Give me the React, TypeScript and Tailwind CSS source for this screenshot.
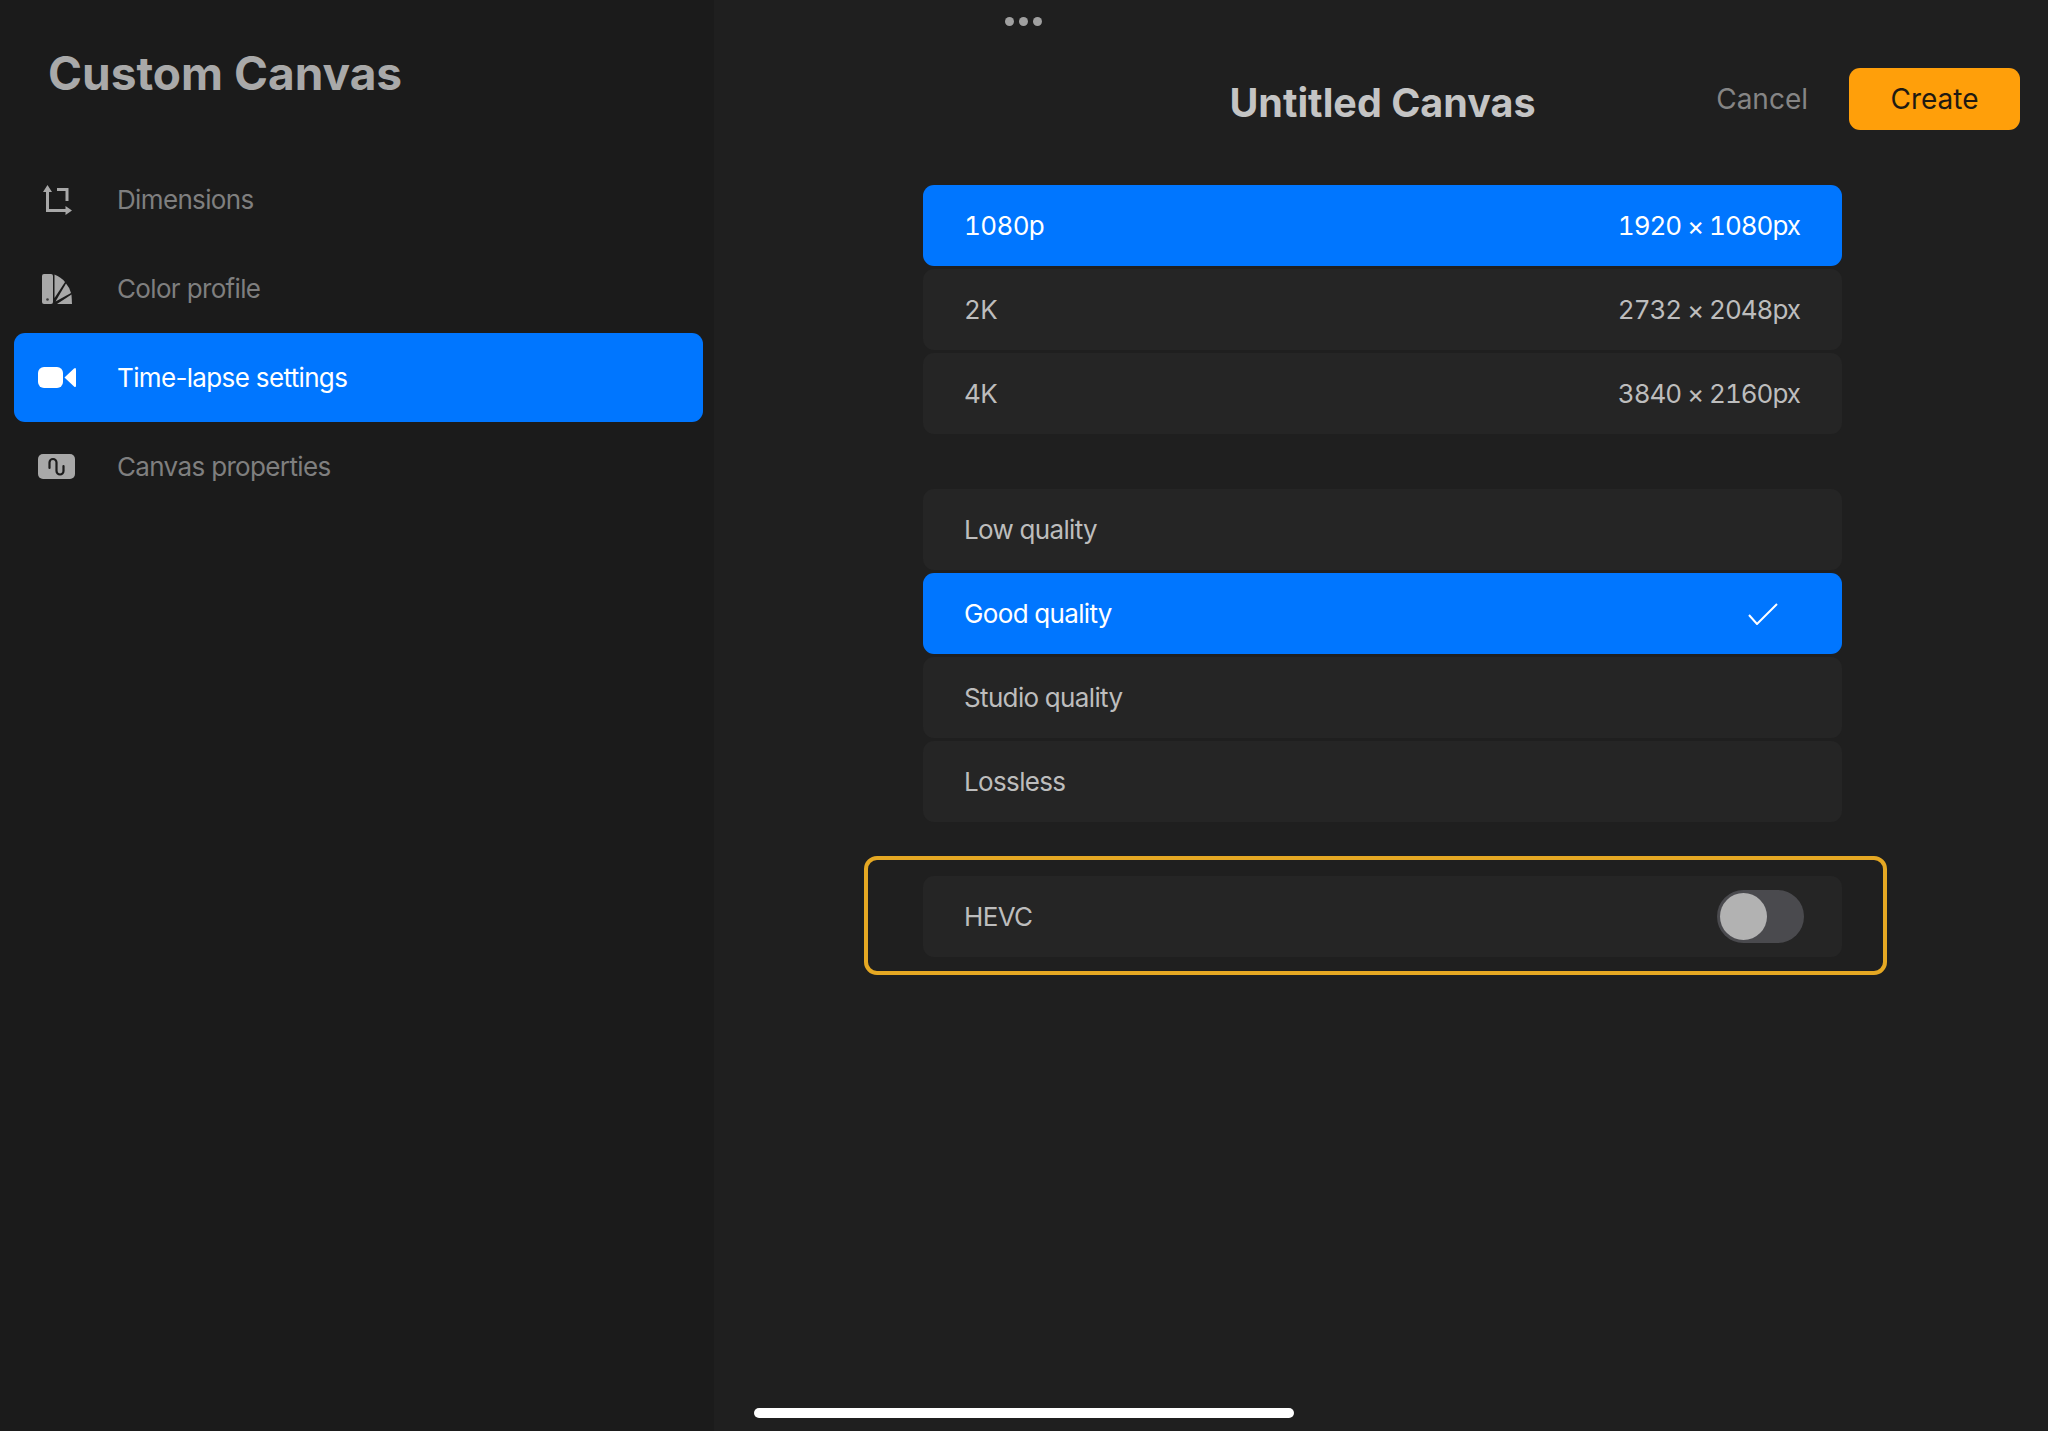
import React from "react";

const font = "font-['Inter','Liberation_Sans',sans-serif]";

function DimensionsIcon() {
  return (
    <svg width="30" height="30" viewBox="0 0 30 30" fill="none" className="block">
      <path d="M5.5 5V25.5H26" stroke="#a8a8a8" strokeWidth="3" />
      <path d="M5.5 0L10 7H1Z M30 25.5L23.5 21V30Z" fill="#a8a8a8" />
      <path d="M15 4.5H25V16" stroke="#a8a8a8" strokeWidth="3" />
    </svg>
  );
}

function ColorIcon() {
  return (
    <svg width="30" height="30" viewBox="0 0 30 30" className="block">
      <rect x="0" y="0" width="11" height="30" rx="2" fill="#a8a8a8" />
      <circle cx="5.5" cy="25.5" r="1.3" fill="#3a3a3a" />
      <path d="M12.5 0.5Q19 3 23 8L12.5 24Z" fill="#a8a8a8" />
      <path d="M24 9.5Q28 14 29 19L13.5 27.5Z" fill="#a8a8a8" />
      <path d="M29.5 20.5L30 30H15Z" fill="#a8a8a8" />
    </svg>
  );
}

function VideoIcon() {
  return (
    <svg width="38" height="21" viewBox="0 0 38 21" className="block">
      <rect x="0" y="0" width="25" height="21" rx="6" fill="#ffffff" />
      <path d="M26.5 10.5L36 1.5Q38 0 38 2.5V18.5Q38 21 36 19.5Z" fill="#ffffff" />
    </svg>
  );
}

function PropertiesIcon() {
  return (
    <svg width="37" height="25" viewBox="0 0 37 25" fill="none" className="block">
      <rect x="0" y="0" width="37" height="25" rx="5" fill="#a8a8a8" />
      <path
        d="M11.5 14V8.5a3.5 3.5 0 0 1 7 0V17a3.5 3.5 0 0 0 7 0V12"
        stroke="#1c1c1c"
        strokeWidth="2.2"
        strokeLinecap="round"
      />
    </svg>
  );
}

function NavItem({
  icon,
  label,
  active,
}: {
  icon: React.ReactNode;
  label: string;
  active?: boolean;
}) {
  return (
    <div
      className={`flex h-[89px] items-center rounded-[11px] ${
        active ? "bg-[#0076ff] text-white" : "text-[#7f7f7f]"
      }`}
    >
      <div className="flex w-[103px] shrink-0 justify-center pr-[18px]">{icon}</div>
      <span className="text-[26px] leading-none tracking-[-0.65px]">{label}</span>
    </div>
  );
}

function Row({
  label,
  right,
  active,
  check,
}: {
  label: string;
  right?: string;
  active?: boolean;
  check?: boolean;
}) {
  return (
    <div
      className={`flex h-[81px] items-center justify-between rounded-[11px] pl-[41px] pr-[42px] text-[26px] leading-none tracking-[-0.65px] ${
        active ? "bg-[#0076ff] text-white" : "bg-[#252525] text-[#bdbdbd]"
      }`}
    >
      <span className="tabular-nums">{label}</span>
      {right ? <span className="tabular-nums tracking-[-1px]">{right}</span> : null}
      {check ? (
        <svg width="30" height="22" viewBox="0 0 30 22" fill="none" className="mr-[22px] block">
          <path d="M1 12L9 21L29 1" stroke="#ffffff" strokeWidth="2" />
        </svg>
      ) : null}
    </div>
  );
}

export default function App() {
  return (
    <div className={`relative flex h-[1431px] w-full overflow-hidden bg-[#1f1f1f] ${font}`}>
      <div className="absolute left-[1005px] top-[17px] flex gap-[5px]">
        <div className="size-[9px] rounded-full bg-[#a0a0a0]" />
        <div className="size-[9px] rounded-full bg-[#a0a0a0]" />
        <div className="size-[9px] rounded-full bg-[#a0a0a0]" />
      </div>

      <aside className="w-[714px] shrink-0 bg-[#1b1b1b] pl-[14px] pr-[11px]">
        <h1 className="pl-[34px] pt-[46px] text-[46px] font-bold leading-[55px] text-[#a9a9a9]">
          Custom Canvas
        </h1>
        <nav className="mt-[54px] flex flex-col">
          <NavItem icon={<DimensionsIcon />} label="Dimensions" />
          <NavItem icon={<ColorIcon />} label="Color profile" />
          <NavItem icon={<VideoIcon />} label="Time-lapse settings" active />
          <NavItem icon={<PropertiesIcon />} label="Canvas properties" />
        </nav>
      </aside>

      <main className="flex-1 pl-[209px] pr-[28px] pt-[68px]">
        <header className="grid h-[62px] items-center">
          <h2 className="col-start-1 row-start-1 mt-[10px] w-[919px] text-center text-[39.5px] font-bold leading-none text-[#c4c4c4]">
            Untitled Canvas
          </h2>
          <div className="col-start-1 row-start-1 flex items-center justify-self-end">
            <span className="mr-[41px] text-[28px] leading-none text-[#858585]">Cancel</span>
            <button className="h-[62px] w-[171px] rounded-[11px] bg-[#ff9f0a] text-[28px] leading-none text-[#1f1a12]">
              Create
            </button>
          </div>
        </header>

        <section className="mt-[55px] flex w-[919px] flex-col gap-[3px]">
          <Row label="1080p" right="1920 × 1080px" active />
          <Row label="2K" right="2732 × 2048px" />
          <Row label="4K" right="3840 × 2160px" />
        </section>

        <section className="mt-[55px] flex w-[919px] flex-col gap-[3px]">
          <Row label="Low quality" />
          <Row label="Good quality" active check />
          <Row label="Studio quality" />
          <Row label="Lossless" />
        </section>

        <section className="relative mt-[54px] w-[919px]">
          <div className="flex h-[81px] items-center justify-between rounded-[11px] bg-[#252525] pl-[41px] pr-[38px] text-[26px] leading-none tracking-[-0.65px] text-[#bdbdbd]">
            <span>HEVC</span>
            <div className="flex h-[53px] w-[87px] items-center rounded-full bg-[#4a4a4e] pl-[3px]">
              <div className="size-[47px] rounded-full bg-[#b2b2b2]" />
            </div>
          </div>
          <div className="absolute bottom-[-18px] left-[-59px] right-[-45px] top-[-20px] rounded-[13px] border-[4px] border-[#e5a823]" />
        </section>
      </main>

      <div className="absolute bottom-[13px] left-[754px] h-[10px] w-[540px] rounded-full bg-white" />
    </div>
  );
}
